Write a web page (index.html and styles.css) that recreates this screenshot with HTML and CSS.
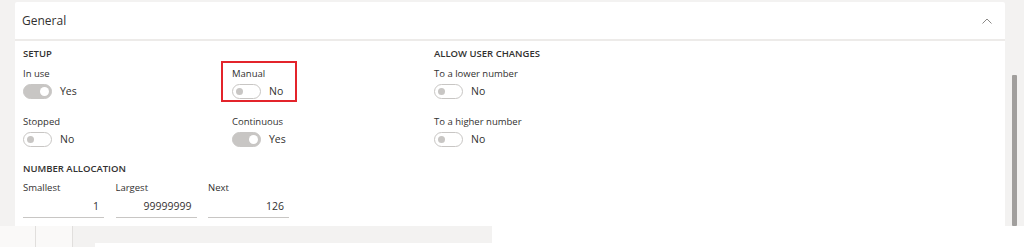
FILE: index.html
```html
<!DOCTYPE html>
<html lang="en">
<head>
<meta charset="utf-8">
<title>Number sequence - General</title>
<link rel="stylesheet" href="styles.css">
</head>
<body>
<div class="workspace">
  <div class="page">
    <section class="card">
      <header class="card-header">
        <h2 class="card-title">General</h2>
        <svg class="chevron" width="10" height="6" viewBox="0 0 10 6" aria-hidden="true">
          <polyline points="0.5,5.5 5,1 9.5,5.5" fill="none" stroke="#8a8886" stroke-width="1"/>
        </svg>
      </header>
      <div class="card-body">
        <div class="groups">
          <div class="group group-setup">
            <h3 class="group-title">SETUP</h3>
            <div class="field-grid two-col">
              <div class="field">
                <div class="field-label">In use</div>
                <div class="toggle-row"><span class="toggle on"><span class="knob"></span></span><span class="toggle-value">Yes</span></div>
              </div>
              <div class="field highlight">
                <div class="field-label">Manual</div>
                <div class="toggle-row"><span class="toggle"><span class="knob"></span></span><span class="toggle-value">No</span></div>
              </div>
              <div class="field">
                <div class="field-label">Stopped</div>
                <div class="toggle-row"><span class="toggle"><span class="knob"></span></span><span class="toggle-value">No</span></div>
              </div>
              <div class="field">
                <div class="field-label">Continuous</div>
                <div class="toggle-row"><span class="toggle on"><span class="knob"></span></span><span class="toggle-value">Yes</span></div>
              </div>
            </div>
          </div>
          <div class="group group-allow">
            <h3 class="group-title">ALLOW USER CHANGES</h3>
            <div class="field-grid">
              <div class="field">
                <div class="field-label">To a lower number</div>
                <div class="toggle-row"><span class="toggle"><span class="knob"></span></span><span class="toggle-value">No</span></div>
              </div>
              <div class="field">
                <div class="field-label">To a higher number</div>
                <div class="toggle-row"><span class="toggle"><span class="knob"></span></span><span class="toggle-value">No</span></div>
              </div>
            </div>
          </div>
        </div>
        <div class="group group-numbers">
          <h3 class="group-title">NUMBER ALLOCATION</h3>
          <div class="num-fields">
            <div class="num-field">
              <div class="field-label">Smallest</div>
              <div class="num-input">1</div>
            </div>
            <div class="num-field">
              <div class="field-label">Largest</div>
              <div class="num-input">99999999</div>
            </div>
            <div class="num-field">
              <div class="field-label">Next</div>
              <div class="num-input">126</div>
            </div>
          </div>
        </div>
      </div>
    </section>
  </div>
  <div class="scrollbar"><div class="thumb"></div></div>
</div>
<div class="statusbar">
  <div class="sb-cell"></div>
  <div class="sb-cell wide"></div>
  <div class="sb-tray"><div class="sb-box"></div></div>
  <div class="sb-rest"></div>
</div>
</body>
</html>
```
FILE: styles.css
```css
html, body {
  margin: 0;
  padding: 0;
}
body {
  width: 1024px;
  height: 247px;
  overflow: hidden;
  background: #f3f2f1;
  font-family: "Open Sans", "Noto Sans", sans-serif;
  color: #323130;
}
.workspace {
  display: flex;
  height: 226px;
}
.page {
  flex: 1;
  padding: 2px 0 0 15px;
}
.card {
  height: 224px;
  background: #fff;
  border-radius: 2px 2px 0 0;
}
.card-header {
  height: 37px;
  display: flex;
  align-items: center;
  justify-content: space-between;
  padding: 0 13px 0 7px;
  border-bottom: 2px solid #edebe9;
}
.card-title {
  margin: 0;
  font-size: 12px;
  font-weight: 400;
  color: #323130;
}
.chevron {
  display: block;
}
.card-body {
  padding: 6px 8px 0;
}
.groups {
  display: flex;
}
.group-setup {
  width: 411px;
}
.group-title {
  margin: 0;
  font-size: 9.5px;
  line-height: 13px;
  font-weight: 600;
  color: #323130;
}
.field-grid {
  display: grid;
  grid-template-columns: 202px;
  row-gap: 16px;
  margin-top: 7px;
}
.field-grid.two-col {
  grid-template-columns: 209px 202px;
}
.field {
  position: relative;
}
.field.highlight::after {
  content: "";
  position: absolute;
  left: -11px;
  top: -6px;
  width: 76px;
  height: 41px;
  box-sizing: border-box;
  border: 2px solid #e3242b;
}
.field-label {
  font-size: 9.5px;
  line-height: 13px;
  color: #323130;
}
.toggle-row {
  display: flex;
  align-items: center;
  gap: 8px;
  height: 16px;
  margin-top: 3px;
}
.toggle {
  width: 29px;
  height: 15px;
  box-sizing: border-box;
  border: 1px solid #c8c6c4;
  border-radius: 8px;
  background: #fff;
  display: flex;
  align-items: center;
  padding: 0 3px;
}
.knob {
  width: 7px;
  height: 7px;
  border-radius: 50%;
  background: #c8c6c4;
}
.toggle.on {
  background: #c8c6c4;
  justify-content: flex-end;
  padding: 0 2px;
}
.toggle.on .knob {
  width: 9px;
  height: 9px;
  background: #fff;
}
.toggle-value {
  font-size: 10.5px;
  line-height: 16px;
  color: #323130;
}
.group-numbers {
  margin-top: 15px;
}
.num-fields {
  display: flex;
  gap: 11.5px;
  margin-top: 6px;
}
.num-field {
  width: 81px;
}
.num-input {
  margin-top: 1px;
  height: 22px;
  line-height: 22px;
  font-size: 10.5px;
  text-align: right;
  padding-right: 5px;
  border-bottom: 1px solid #c8c6c4;
  color: #323130;
}
.scrollbar {
  width: 19px;
  padding-left: 7px;
  box-sizing: border-box;
}
.thumb {
  width: 5px;
  height: 151px;
  margin-top: 75px;
  background: #a19f9d;
  border-radius: 1px;
}
.statusbar {
  display: flex;
  height: 21px;
}
.sb-cell {
  width: 35px;
  background: #faf9f8;
  border-right: 1px solid #e1dfdd;
}
.sb-cell.wide {
  width: 36px;
}
.sb-tray {
  width: 419px;
  box-sizing: border-box;
  background: #f3f2f1;
  padding: 17px 0 0 22px;
}
.sb-box {
  height: 4px;
  background: #fff;
}
.sb-rest {
  flex: 1;
  background: #fff;
}
```
